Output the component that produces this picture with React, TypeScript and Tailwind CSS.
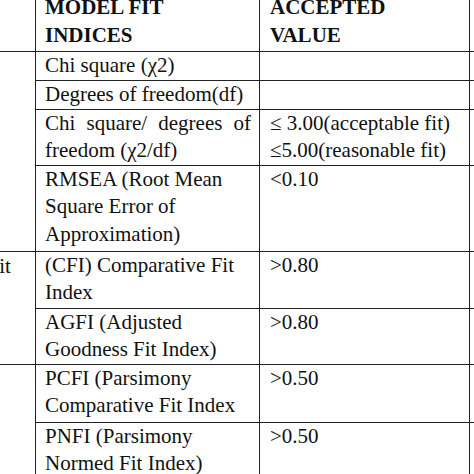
const rows = [
  { h: "h-[29px]", index: ["Chi square (χ2)"], value: [] as string[] },
  { h: "h-[29px]", index: ["Degrees of freedom(df)"], value: [] },
  {
    h: "h-[56px]",
    index: ["Chi square/ degrees of", "freedom (χ2/df)"],
    value: ["≤ 3.00(acceptable fit)", "≤5.00(reasonable fit)"],
    justify: true,
  },
  { h: "h-[86px]", index: ["RMSEA (Root Mean", "Square Error of", "Approximation)"], value: ["<0.10"] },
  { h: "h-[57px]", index: ["(CFI) Comparative Fit", "Index"], value: [">0.80"] },
  { h: "h-[56px]", index: ["AGFI (Adjusted", "Goodness Fit Index)"], value: [">0.80"] },
  { h: "h-[58px]", index: ["PCFI (Parsimony", "Comparative Fit Index"], value: [">0.50"] },
  { h: "h-[58px]", index: ["PNFI (Parsimony", "Normed Fit Index)"], value: [">0.50"] },
];

// left column cell groups (rowSpan) — only the right edge shows in the crop
const groups: Record<number, { span: number; text: string }> = {
  0: { span: 4, text: "" },
  4: { span: 2, text: "Incremental Fit" },
  6: { span: 2, text: "" },
};

export default function App() {
  const cell = "border border-[#222] align-top p-0";
  return (
    <div className="w-[474px] h-[474px] overflow-hidden bg-white text-[#111] font-['Liberation_Serif',serif] text-[21px] leading-[27.5px]">
      <table className="table-fixed border-collapse -ml-[126px] -mt-[7px] w-[700px]">
        <colgroup>
          <col className="w-[161px]" />
          <col className="w-[224px]" />
          <col className="w-[210px]" />
          <col className="w-[105px]" />
        </colgroup>
        <thead>
          <tr className="h-[58px]">
            <th className={`${cell} border-t-0`} />
            <th className={`${cell} border-t-0 text-left font-bold pl-[9px] leading-[28px]`}>
              MODEL FIT
              <br />
              INDICES
            </th>
            <th className={`${cell} border-t-0 text-left font-bold pl-[10px] leading-[28px]`}>
              ACCEPTED
              <br />
              VALUE
            </th>
            <th className={`${cell} border-t-0`} />
          </tr>
        </thead>
        <tbody>
          {rows.map((r, i) => (
            <tr key={i} className={r.h}>
              {groups[i] && (
                <td rowSpan={groups[i].span} className={`${cell} pl-[7px] pt-[1px]`}>
                  {groups[i].text}
                </td>
              )}
              <td className={`${cell} pl-[9px] pr-[8px]`}>
                {r.index.map((t, k) => (
                  <div
                    key={k}
                    className={
                      r.justify && k === 0
                        ? "text-justify [text-align-last:justify]"
                        : "whitespace-nowrap"
                    }
                  >
                    {t}
                  </div>
                ))}
              </td>
              <td className={`${cell} pl-[10px]`}>
                {r.value.map((t, k) => (
                  <div key={k} className="whitespace-nowrap">
                    {t}
                  </div>
                ))}
              </td>
              <td className={cell} />
            </tr>
          ))}
        </tbody>
      </table>
    </div>
  );
}
